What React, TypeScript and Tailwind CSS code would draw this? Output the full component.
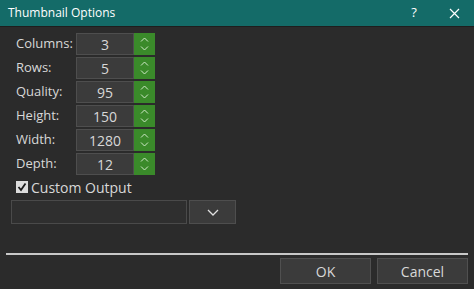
import React, { useState } from 'react';

const fields = [
  { label: 'Columns:', value: '3' },
  { label: 'Rows:', value: '5' },
  { label: 'Quality:', value: '95' },
  { label: 'Height:', value: '150' },
  { label: 'Width:', value: '1280' },
  { label: 'Depth:', value: '12' },
];

function Spinner({ value }: { value: string }) {
  return (
    <div className="flex h-[22px]">
      <div className="w-[58px] flex items-center justify-center bg-[#3b3b3b] border border-[#4e4e4e] text-[#d8d8d8] text-[14px]">
        {value}
      </div>
      <div className="w-[21px] bg-[#3a8a2a] flex flex-col items-center justify-center">
        <svg width="9" height="16" viewBox="0 0 9 16" fill="none" stroke="#cfe8c8" strokeWidth="1">
          <path d="M1 5.5 L4.5 2 L8 5.5" />
          <path d="M1 10.5 L4.5 14 L8 10.5" />
        </svg>
      </div>
    </div>
  );
}

export default function App() {
  const [checked, setChecked] = useState(true);

  return (
    <div className="w-[474px] h-[289px] bg-[#2b2b2b] flex flex-col overflow-hidden text-[13px]" style={{ fontFamily: '"Open Sans", "Noto Sans", sans-serif' }}>
      {/* Title bar */}
      <div className="h-[27px] bg-[#146b68] flex items-center pl-[8px] text-white border-b border-[#1e1e1e] shrink-0">
        <span className="text-[12px] flex-1">Thumbnail Options</span>
        <span className="text-[13px] w-[40px] text-center">?</span>
        <span className="w-[40px] flex justify-center">
          <svg width="11" height="11" viewBox="0 0 11 11" stroke="#ffffff" strokeWidth="1.2">
            <path d="M1 1 L10 10 M10 1 L1 10" />
          </svg>
        </span>
      </div>

      {/* Body */}
      <div className="flex flex-col pl-[16px] pt-[6px] gap-[2px] text-[#d8d8d8]">
        {fields.map(f => (
          <div key={f.label} className="flex items-center h-[22px]">
            <span className="w-[60px]">{f.label}</span>
            <Spinner value={f.value} />
          </div>
        ))}
        <label className="flex items-center gap-[3px] h-[20px]">
          <button
            onClick={() => setChecked(c => !c)}
            className="w-[12px] h-[12px] bg-[#dcdcdc] flex items-center justify-center"
          >
            {checked && (
              <svg width="10" height="10" viewBox="0 0 10 10" fill="none" stroke="#1a1a1a" strokeWidth="1.8">
                <path d="M1.5 5 L4 8 L8.5 1.5" />
              </svg>
            )}
          </button>
          <span className="text-[14px]">Custom Output</span>
        </label>
      </div>

      <div className="flex pl-[11px] mt-[3px] gap-[2px]">
        <div className="w-[176px] h-[24px] bg-[#2f2f2f] border border-[#4a4a4a]" />
        <div className="w-[47px] h-[24px] bg-[#3b3b3b] border border-[#4e4e4e] flex items-center justify-center">
          <svg width="12" height="7" viewBox="0 0 12 7" fill="none" stroke="#e0e0e0" strokeWidth="1.3">
            <path d="M1 1 L6 6 L11 1" />
          </svg>
        </div>
      </div>

      <div className="mt-auto flex flex-col px-[6px] pb-[5px]">
        <div className="h-[2px] bg-[#c8c8c8]" />
        <div className="flex justify-end gap-[6px] mt-[3px]">
          <button className="w-[91px] h-[26px] bg-[#3b3b3b] border border-[#505050] text-[#d8d8d8] text-[14px]">OK</button>
          <button className="w-[91px] h-[26px] bg-[#3b3b3b] border border-[#505050] text-[#d8d8d8] text-[14px]">Cancel</button>
        </div>
      </div>
    </div>
  );
}
